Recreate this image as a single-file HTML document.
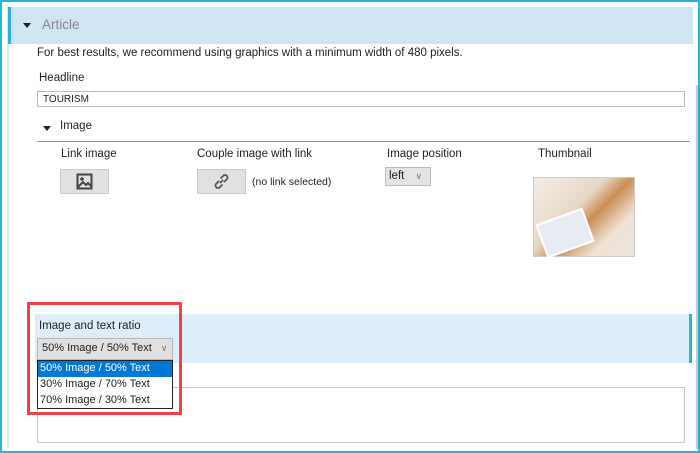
<!DOCTYPE html>
<html><head><style>
*{margin:0;padding:0;box-sizing:border-box}
body{width:700px;height:453px;position:relative;background:#fff;font-family:"Liberation Sans",sans-serif;font-size:11.5px;color:#222;overflow:hidden}
.a{position:absolute}
</style></head><body>
<div class="a" style="left:0;top:0;width:700px;height:453px;border:2px solid #2ab4da"></div>
<div class="a" style="left:7px;top:4px;width:2px;height:445px;background:#d8ecf8"></div>
<div class="a" style="left:8px;top:7px;width:685px;height:37px;background:#cfe5f3"></div>
<div class="a" style="left:8px;top:7px;width:3px;height:37px;background:#2ab4da"></div>
<div class="a" style="left:23px;top:23px;width:0;height:0;border-left:4px solid transparent;border-right:4px solid transparent;border-top:5px solid #222"></div>
<div class="a" style="left:42px;top:17px;font-size:13.5px;color:#888">Article</div>
<div class="a" style="left:37px;top:47px">For best results, we recommend using graphics with a minimum width of 480 pixels.</div>
<div class="a" style="left:39px;top:72px">Headline</div>
<div class="a" style="left:37px;top:91px;width:648px;height:16px;border:1px solid #bbb;font-size:10px;padding:2px 0 0 5px">TOURISM</div>
<div class="a" style="left:43px;top:126px;width:0;height:0;border-left:4px solid transparent;border-right:4px solid transparent;border-top:5px solid #222"></div>
<div class="a" style="left:60px;top:120px">Image</div>
<div class="a" style="left:37px;top:141px;width:653px;height:1px;background:#3bb8e0"></div>
<div class="a" style="left:61px;top:148px">Link image</div>
<div class="a" style="left:197px;top:148px">Couple image with link</div>
<div class="a" style="left:387px;top:148px">Image position</div>
<div class="a" style="left:538px;top:148px">Thumbnail</div>
<div class="a" style="left:60px;top:169px;width:49px;height:25px;background:#e1e1e1;border:1px solid #ccc"></div>
<svg class="a" style="left:76px;top:173px" width="17" height="17" viewBox="0 0 17 17"><rect x="1.5" y="1.5" width="14" height="14" fill="none" stroke="#444" stroke-width="2"/><circle cx="6" cy="6" r="1.8" fill="#444"/><path d="M2 14l5-5 3 3 2-2 4 4" fill="none" stroke="#444" stroke-width="2"/></svg>
<div class="a" style="left:197px;top:169px;width:49px;height:25px;background:#e1e1e1;border:1px solid #ccc"></div>
<svg class="a" style="left:212px;top:172px" width="19" height="19" viewBox="0 0 19 19"><path d="M8 11l3-3" stroke="#555" stroke-width="1.8"/><path d="M7 9l-3 3a2.5 2.5 0 0 0 3.5 3.5l3-3M12 10l3-3a2.5 2.5 0 0 0-3.5-3.5l-3 3" fill="none" stroke="#555" stroke-width="1.8"/></svg>
<div class="a" style="left:252px;top:176px;font-size:10.5px">(no link selected)</div>
<div class="a" style="left:385px;top:167px;width:46px;height:19px;background:#e4e4e4;border:1px solid #bbb;padding:2px 0 0 3px">left <span style="color:#777;margin-left:8px;font-size:9px">&#8744;</span></div>
<div class="a" style="left:533px;top:177px;width:102px;height:80px;border:1px solid #ccc;background:linear-gradient(135deg,#f3ede5 0%,#e8d8c6 40%,#c98e55 55%,#f0e0d0 75%,#e9e5e0 100%)"></div>
<div class="a" style="left:540px;top:215px;width:50px;height:36px;background:#e8ecf2;border:2px solid #fff;transform:rotate(-20deg)"></div>
<div class="a" style="left:35px;top:314px;width:656px;height:49px;background:#ddeefa"></div>
<div class="a" style="left:689px;top:314px;width:3px;height:49px;background:#2ab4da"></div>
<div class="a" style="left:696px;top:85px;width:2px;height:364px;background:#ccc"></div>
<div class="a" style="left:37px;top:387px;width:648px;height:56px;border:1px solid #c8c8c8"></div>
<div class="a" style="left:39px;top:320px">Image and text ratio</div>
<div class="a" style="left:37px;top:338px;width:136px;height:22px;background:#e1e1e1;border:1px solid #b8b8b8;padding:3px 0 0 4px;font-size:11px">50% Image / 50% Text <span style="color:#777;margin-left:6px;font-size:9px">&#8744;</span></div>
<div class="a" style="left:37px;top:360px;width:136px;height:49px;background:#fff;border:1px solid #222;font-size:11px">
<div style="height:16px;background:#0078d7;color:#fff;padding:1px 0 0 2px">50% Image / 50% Text</div>
<div style="height:16px;padding:1px 0 0 2px">30% Image / 70% Text</div>
<div style="height:15px;padding:1px 0 0 2px">70% Image / 30% Text</div>
</div>
<div class="a" style="left:27px;top:302px;width:155px;height:113px;border:3px solid #f04048"></div>
</body></html>
